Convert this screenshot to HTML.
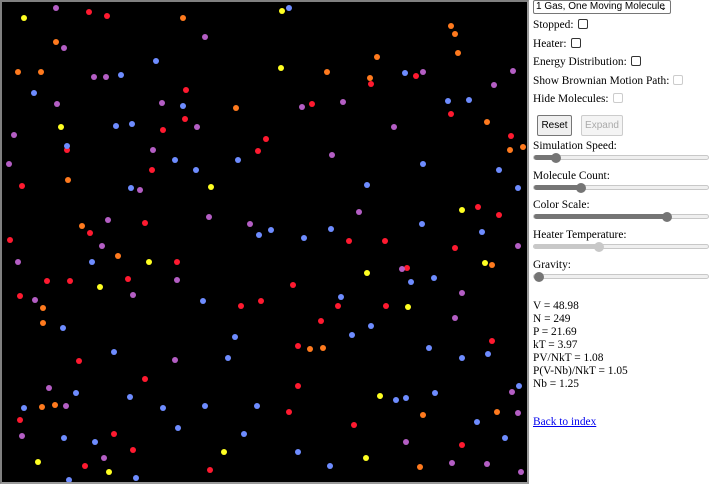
<!DOCTYPE html>
<html><head><meta charset="utf-8"><style>
body{margin:0;width:711px;height:484px;background:#fff;font-family:"Liberation Serif",serif;font-size:11.4px;color:#000;overflow:hidden;position:relative}
#cv{position:absolute;left:0;top:0;width:525px;height:480px;background:#000;border:2px solid #808080;border-right-color:#9a9a9a;border-bottom-color:#9a9a9a}
.t{position:absolute;left:533px;white-space:nowrap;line-height:14px}
.cb{display:inline-block;width:8px;height:8px;border:1px solid #333;border-radius:2px;vertical-align:-1px;margin-left:4px;background:#fff}
.cb.d{border-color:#ccc}
.sel{position:absolute;left:533px;top:0;width:134px;height:12px;border:1px solid #767676;border-radius:2px;font-family:"Liberation Sans",sans-serif;font-size:10px;line-height:12px;padding-left:2px;box-sizing:content-box}
.btn{position:absolute;top:115px;height:19px;border:1px solid #767676;border-radius:2px;background:#efefef;font-family:"Liberation Sans",sans-serif;font-size:10px;line-height:19px;text-align:center}
.tr{position:absolute;left:533px;width:176px;height:5px;border-radius:3px;background:#efefef;border:1px solid #c8c8c8;box-sizing:border-box}
.fill{position:absolute;left:0;top:0;height:5px;border-radius:3px;margin-top:-1px}
.th{position:absolute;width:10px;height:10px;border-radius:50%;top:-3px}
a{color:#00e;text-decoration:underline}
</style></head><body>
<div id="cv"><svg width="525" height="480" style="display:block">
<g fill="#ffff22">
<circle cx="22" cy="16" r="3"/><circle cx="280" cy="9" r="3"/><circle cx="279" cy="66" r="3"/><circle cx="59" cy="125" r="3"/><circle cx="209" cy="185" r="3"/><circle cx="460" cy="208" r="3"/><circle cx="147" cy="260" r="3"/><circle cx="98" cy="285" r="3"/><circle cx="365" cy="271" r="3"/><circle cx="406" cy="305" r="3"/><circle cx="378" cy="394" r="3"/><circle cx="222" cy="450" r="3"/><circle cx="36" cy="460" r="3"/><circle cx="364" cy="456" r="3"/><circle cx="107" cy="470" r="3"/><circle cx="483" cy="261" r="3"/>
</g>
<g fill="#ff1a30">
<circle cx="87" cy="10" r="3"/><circle cx="105" cy="14" r="3"/><circle cx="184" cy="88" r="3"/><circle cx="161" cy="128" r="3"/><circle cx="183" cy="117" r="3"/><circle cx="65" cy="148" r="3"/><circle cx="256" cy="149" r="3"/><circle cx="20" cy="184" r="3"/><circle cx="476" cy="205" r="3"/><circle cx="497" cy="213" r="3"/><circle cx="143" cy="221" r="3"/><circle cx="88" cy="231" r="3"/><circle cx="8" cy="238" r="3"/><circle cx="347" cy="239" r="3"/><circle cx="383" cy="239" r="3"/><circle cx="453" cy="246" r="3"/><circle cx="175" cy="260" r="3"/><circle cx="126" cy="277" r="3"/><circle cx="45" cy="279" r="3"/><circle cx="68" cy="279" r="3"/><circle cx="18" cy="294" r="3"/><circle cx="291" cy="283" r="3"/><circle cx="259" cy="299" r="3"/><circle cx="239" cy="304" r="3"/><circle cx="336" cy="304" r="3"/><circle cx="384" cy="304" r="3"/><circle cx="296" cy="344" r="3"/><circle cx="319" cy="319" r="3"/><circle cx="77" cy="359" r="3"/><circle cx="143" cy="377" r="3"/><circle cx="296" cy="384" r="3"/><circle cx="18" cy="418" r="3"/><circle cx="287" cy="410" r="3"/><circle cx="83" cy="464" r="3"/><circle cx="131" cy="448" r="3"/><circle cx="460" cy="443" r="3"/><circle cx="208" cy="468" r="3"/><circle cx="112" cy="432" r="3"/><circle cx="369" cy="82" r="3"/><circle cx="414" cy="74" r="3"/><circle cx="449" cy="112" r="3"/><circle cx="264" cy="137" r="3"/><circle cx="509" cy="134" r="3"/><circle cx="405" cy="266" r="3"/><circle cx="490" cy="339" r="3"/><circle cx="352" cy="423" r="3"/><circle cx="150" cy="168" r="3"/><circle cx="310" cy="102" r="3"/>
</g>
<g fill="#ff7a1e">
<circle cx="181" cy="16" r="3"/><circle cx="54" cy="40" r="3"/><circle cx="16" cy="70" r="3"/><circle cx="39" cy="70" r="3"/><circle cx="325" cy="70" r="3"/><circle cx="375" cy="55" r="3"/><circle cx="453" cy="32" r="3"/><circle cx="456" cy="51" r="3"/><circle cx="449" cy="24" r="3"/><circle cx="66" cy="178" r="3"/><circle cx="80" cy="224" r="3"/><circle cx="116" cy="254" r="3"/><circle cx="41" cy="306" r="3"/><circle cx="41" cy="321" r="3"/><circle cx="308" cy="347" r="3"/><circle cx="321" cy="346" r="3"/><circle cx="40" cy="405" r="3"/><circle cx="53" cy="403" r="3"/><circle cx="421" cy="413" r="3"/><circle cx="418" cy="465" r="3"/><circle cx="490" cy="263" r="3"/><circle cx="485" cy="120" r="3"/><circle cx="508" cy="148" r="3"/><circle cx="521" cy="145" r="3"/><circle cx="368" cy="76" r="3"/><circle cx="234" cy="106" r="3"/><circle cx="495" cy="410" r="3"/>
</g>
<g fill="#b45ec4">
<circle cx="54" cy="6" r="3"/><circle cx="62" cy="46" r="3"/><circle cx="203" cy="35" r="3"/><circle cx="92" cy="75" r="3"/><circle cx="104" cy="75" r="3"/><circle cx="55" cy="102" r="3"/><circle cx="12" cy="133" r="3"/><circle cx="160" cy="101" r="3"/><circle cx="195" cy="125" r="3"/><circle cx="300" cy="105" r="3"/><circle cx="341" cy="100" r="3"/><circle cx="392" cy="125" r="3"/><circle cx="421" cy="70" r="3"/><circle cx="492" cy="83" r="3"/><circle cx="511" cy="69" r="3"/><circle cx="7" cy="162" r="3"/><circle cx="138" cy="188" r="3"/><circle cx="207" cy="215" r="3"/><circle cx="100" cy="244" r="3"/><circle cx="33" cy="298" r="3"/><circle cx="16" cy="260" r="3"/><circle cx="106" cy="218" r="3"/><circle cx="357" cy="210" r="3"/><circle cx="330" cy="153" r="3"/><circle cx="516" cy="244" r="3"/><circle cx="460" cy="291" r="3"/><circle cx="453" cy="316" r="3"/><circle cx="400" cy="267" r="3"/><circle cx="131" cy="293" r="3"/><circle cx="175" cy="278" r="3"/><circle cx="47" cy="386" r="3"/><circle cx="64" cy="404" r="3"/><circle cx="20" cy="434" r="3"/><circle cx="102" cy="456" r="3"/><circle cx="450" cy="461" r="3"/><circle cx="519" cy="470" r="3"/><circle cx="485" cy="462" r="3"/><circle cx="516" cy="411" r="3"/><circle cx="404" cy="440" r="3"/><circle cx="151" cy="148" r="3"/><circle cx="248" cy="222" r="3"/><circle cx="173" cy="358" r="3"/><circle cx="510" cy="390" r="3"/>
</g>
<g fill="#6e8cff">
<circle cx="287" cy="6" r="3"/><circle cx="119" cy="73" r="3"/><circle cx="32" cy="91" r="3"/><circle cx="154" cy="59" r="3"/><circle cx="181" cy="104" r="3"/><circle cx="114" cy="124" r="3"/><circle cx="130" cy="122" r="3"/><circle cx="65" cy="144" r="3"/><circle cx="173" cy="158" r="3"/><circle cx="236" cy="158" r="3"/><circle cx="129" cy="186" r="3"/><circle cx="194" cy="168" r="3"/><circle cx="403" cy="71" r="3"/><circle cx="446" cy="99" r="3"/><circle cx="467" cy="98" r="3"/><circle cx="421" cy="162" r="3"/><circle cx="497" cy="168" r="3"/><circle cx="516" cy="186" r="3"/><circle cx="365" cy="183" r="3"/><circle cx="329" cy="227" r="3"/><circle cx="257" cy="233" r="3"/><circle cx="269" cy="228" r="3"/><circle cx="409" cy="280" r="3"/><circle cx="432" cy="276" r="3"/><circle cx="339" cy="295" r="3"/><circle cx="369" cy="324" r="3"/><circle cx="350" cy="333" r="3"/><circle cx="201" cy="299" r="3"/><circle cx="233" cy="335" r="3"/><circle cx="226" cy="356" r="3"/><circle cx="112" cy="350" r="3"/><circle cx="61" cy="326" r="3"/><circle cx="74" cy="391" r="3"/><circle cx="128" cy="395" r="3"/><circle cx="161" cy="406" r="3"/><circle cx="203" cy="404" r="3"/><circle cx="242" cy="432" r="3"/><circle cx="176" cy="426" r="3"/><circle cx="62" cy="436" r="3"/><circle cx="93" cy="440" r="3"/><circle cx="22" cy="406" r="3"/><circle cx="394" cy="398" r="3"/><circle cx="404" cy="396" r="3"/><circle cx="433" cy="391" r="3"/><circle cx="475" cy="420" r="3"/><circle cx="503" cy="436" r="3"/><circle cx="486" cy="352" r="3"/><circle cx="460" cy="356" r="3"/><circle cx="427" cy="346" r="3"/><circle cx="517" cy="384" r="3"/><circle cx="67" cy="478" r="3"/><circle cx="134" cy="476" r="3"/><circle cx="296" cy="450" r="3"/><circle cx="328" cy="464" r="3"/><circle cx="255" cy="404" r="3"/><circle cx="90" cy="260" r="3"/><circle cx="302" cy="236" r="3"/><circle cx="420" cy="222" r="3"/><circle cx="480" cy="230" r="3"/>
</g>
</svg></div>

<div class="sel">1 Gas, One Moving Molecule <span style="position:absolute;right:3px;top:0;font-size:9px">&#8964;</span></div>
<div class="t" style="top:18px">Stopped:<span class="cb"></span></div>
<div class="t" style="top:37px">Heater:<span class="cb"></span></div>
<div class="t" style="top:55px">Energy Distribution:<span class="cb"></span></div>
<div class="t" style="top:74px">Show Brownian Motion Path:<span class="cb d"></span></div>
<div class="t" style="top:92px">Hide Molecules:<span class="cb d"></span></div>
<div class="btn" style="left:537px;width:33px">Reset</div>
<div class="btn" style="left:581px;width:40px;color:#aaa;border-color:#ccc;background:#f4f4f4">Expand</div>

<div class="t" style="top:139px">Simulation Speed:</div>
<div class="tr" style="top:155px"><div class="fill" style="width:22px;background:#757575"></div><div class="th" style="left:17px;background:#757575"></div></div>
<div class="t" style="top:169px">Molecule Count:</div>
<div class="tr" style="top:185px"><div class="fill" style="width:48px;background:#757575"></div><div class="th" style="left:42px;background:#757575"></div></div>
<div class="t" style="top:198px">Color Scale:</div>
<div class="tr" style="top:214px"><div class="fill" style="width:134px;background:#757575"></div><div class="th" style="left:128px;background:#757575"></div></div>
<div class="t" style="top:228px">Heater Temperature:</div>
<div class="tr" style="top:244px"><div class="fill" style="width:66px;background:#c8c8c8"></div><div class="th" style="left:60px;background:#c8c8c8"></div></div>
<div class="t" style="top:258px">Gravity:</div>
<div class="tr" style="top:274px"><div class="th" style="left:0px;background:#757575"></div></div>

<div class="t" style="top:300px;line-height:13px">V = 48.98<br>N = 249<br>P = 21.69<br>kT = 3.97<br>PV/NkT = 1.08<br>P(V-Nb)/NkT = 1.05<br>Nb = 1.25</div>
<div class="t" style="top:415px"><a>Back to index</a></div>
</body></html>
